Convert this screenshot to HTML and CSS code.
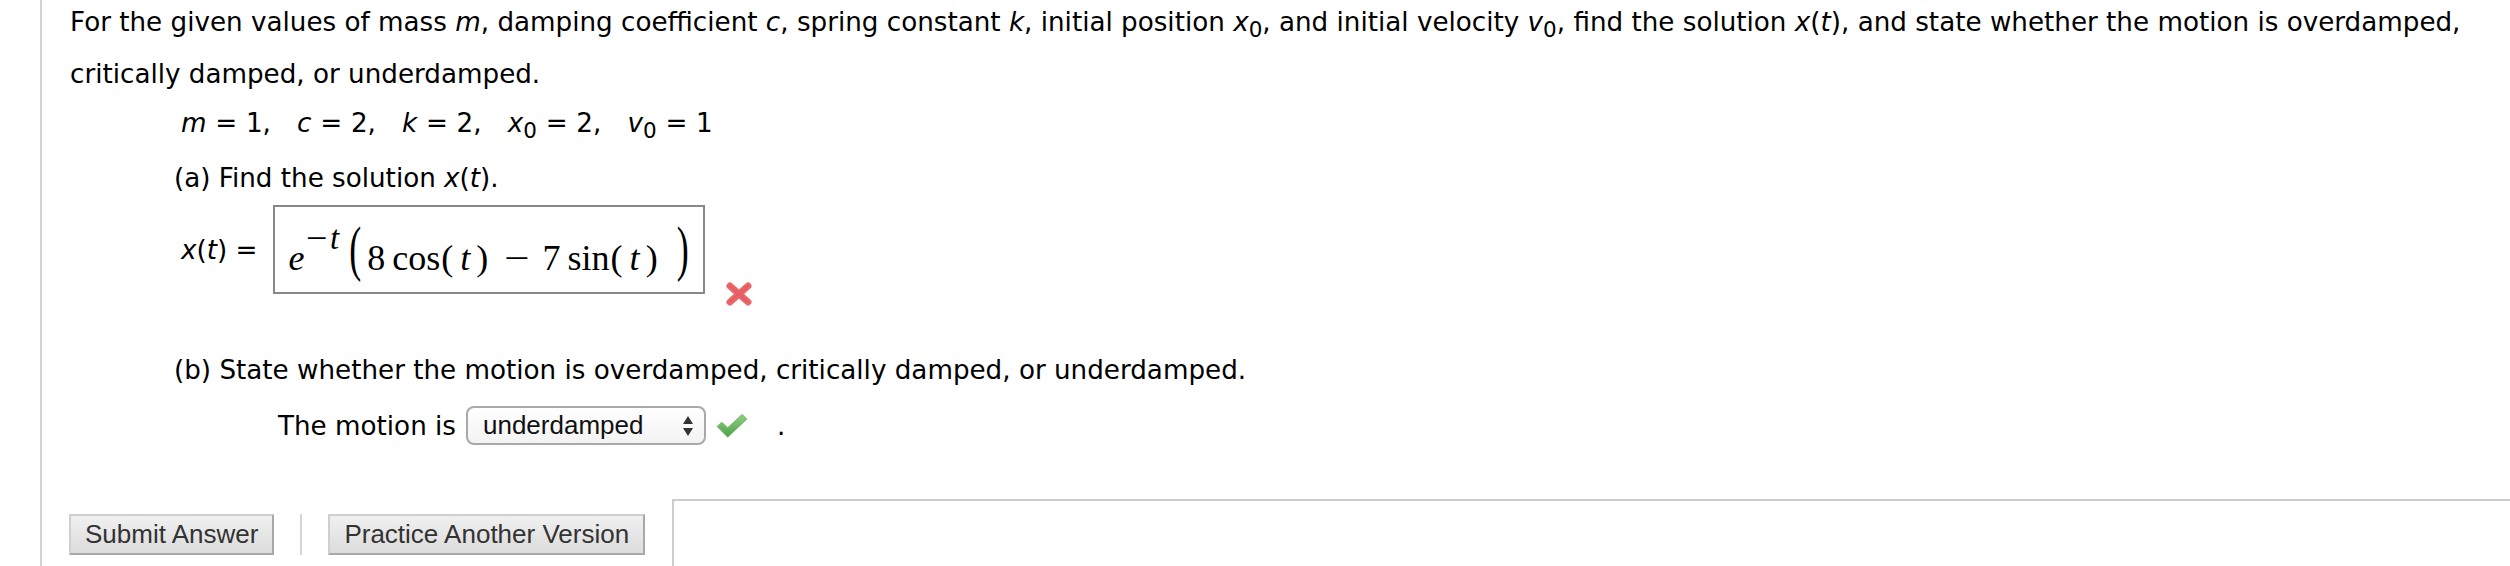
FILE: index.html
```html
<!DOCTYPE html>
<html lang="en">
<head>
<meta charset="utf-8">
<title>Damped motion</title>
<link rel="stylesheet" href="styles.css">
</head>
<body>
<div class="page">
  <p class="intro">For the given values of mass <i>m</i>, damping coefficient <i>c</i>, spring constant <i>k</i>, initial position <i>x</i><sub>0</sub>, and initial velocity <i>v</i><sub>0</sub>, find the solution <i>x</i>(<i>t</i>), and state whether the motion is overdamped, critically damped, or underdamped.</p>
  <div class="given"><i>m</i> = 1,&nbsp;&nbsp; <i>c</i> = 2,&nbsp;&nbsp; <i>k</i> = 2,&nbsp;&nbsp; <i>x</i><sub>0</sub> = 2,&nbsp;&nbsp; <i>v</i><sub>0</sub> = 1</div>
  <div class="part">(a) Find the solution <i>x</i>(<i>t</i>).</div>
  <div class="answer">
    <span class="answer-label"><i>x</i>(<i>t</i>) =</span>
    <div class="math-box">
      <div class="mrow"><span class="mi">e</span><span class="msup"><span class="sup-op">−</span><span class="mi sup-t">t</span></span><span class="big big-l">(</span><span class="mn n8">8</span><span class="fn">cos</span><span class="par">(</span><span class="mi arg">t</span><span class="par">)</span><span class="op">−</span><span class="mn">7</span><span class="fn">sin</span><span class="par">(</span><span class="mi arg">t</span><span class="par">)</span><span class="big big-r">)</span></div>
    </div>
    <svg class="wrong" viewBox="0 0 28 26" aria-label="incorrect">
      <path d="M5 5 L23 21 M23 5 L5 21" stroke="#e9686a" stroke-width="7" stroke-linecap="round" fill="none"/>
      <path d="M5 5 L23 21 M23 5 L5 21" stroke="#e04f52" stroke-width="3" stroke-linecap="round" fill="none" opacity="0.35"/>
    </svg>
  </div>
  <div class="part part-b">(b) State whether the motion is overdamped, critically damped, or underdamped.</div>
  <div class="motion">
    <span>The motion is</span>
    <div class="select">
      <span>underdamped</span>
      <svg class="arrows" viewBox="0 0 12 22"><path d="M6 1 L11 9 L1 9 Z M1 13 L11 13 L6 21 Z" fill="#333"/></svg>
    </div>
    <svg class="check" viewBox="0 0 30 25" aria-label="correct">
      <defs><linearGradient id="g" x1="0" y1="0" x2="0" y2="1"><stop offset="0" stop-color="#8fd283"/><stop offset="1" stop-color="#4f9f48"/></linearGradient></defs>
      <path d="M1 13.5 L5.5 9.5 L11 14.5 L24.5 2 L29 6.5 L11 23.5 Z" fill="url(#g)" stroke="#5aa953" stroke-width="0.6" stroke-linejoin="round"/>
    </svg>
    <span class="period">.</span>
  </div>
  <div class="actions">
    <button class="btn btn-first" type="button">Submit Answer</button>
    <span class="sep"></span>
    <button class="btn" type="button">Practice Another Version</button>
    <div class="panel"></div>
  </div>
</div>
</body>
</html>
```
FILE: styles.css
```css
* { box-sizing: border-box; }
html, body { margin: 0; padding: 0; background: #fff; }
body {
  font-family: "DejaVu Sans", Verdana, sans-serif;
  font-size: 26.2px;
  color: #000;
  height: 566px;
  overflow: hidden;
}
.page {
  margin-left: 40px;
  border-left: 2px solid #d4d4d4;
  padding-left: 28px;
  min-height: 566px;
}
sub {
  font-size: 0.82em;
  vertical-align: -0.3em;
  line-height: 0;
}
.intro {
  margin: -4px 0 0;
  line-height: 52px;
  padding-right: 20px;
}
.given {
  margin: 3px 0 0 111px;
  line-height: 40px;
  word-spacing: 0.4px;
}
.part {
  margin: 15px 0 0 104px;
  line-height: 40px;
}
.answer {
  display: flex;
  align-items: center;
  margin: 7px 0 0 111px;
}
.answer-label { margin-right: 16px; }
.math-box {
  width: 432px;
  height: 89px;
  border: 2px solid #888;
  padding: 31px 0 0 13px;
  font-family: "Liberation Serif", "Times New Roman", serif;
  font-size: 36px;
}
.mrow {
  line-height: 40px;
  white-space: nowrap;
}
.mrow span { display: inline-block; }
.mi { font-style: italic; }
.msup {
  font-size: 33px;
  position: relative;
  top: -21px;
  margin-left: 2px;
}
.sup-op {
  transform: scaleX(1.15);
  transform-origin: 0 50%;
  margin-right: 2px;
}
.sup-t { margin-left: 3px; }
.big {
  transform: translateY(-9px) scaleY(1.7);
  transform-origin: 50% 50%;
}
.big-l { margin-left: 10px; }
.big-r { margin-left: 18px; }
.n8 { margin-left: 6px; }
.fn { margin-left: 7px; }
.par { margin: 0 1px; }
.arg { margin: 0 5px 0 6px; }
.op {
  margin: 0 18px 0 15px;
  transform: scaleX(1.25);
  transform-origin: 0 50%;
}
.wrong {
  align-self: flex-end;
  width: 28px;
  height: 26px;
  margin: 0 0 -13px 20px;
}
.part-b { margin-top: 56px; }
.motion {
  display: flex;
  align-items: center;
  margin: 16px 0 0 208px;
}
.select {
  width: 240px;
  height: 39px;
  margin-left: 10px;
  border: 2px solid #a9a9a9;
  border-radius: 8px;
  background: linear-gradient(#ffffff, #f3f3f3);
  display: flex;
  align-items: center;
  justify-content: space-between;
  padding: 0 10px 0 15px;
  font-family: "Liberation Sans", Arial, sans-serif;
  font-size: 26px;
  color: #111;
}
.arrows { width: 12px; height: 22px; }
.check {
  width: 32px;
  height: 27px;
  margin-left: 10px;
}
.period { margin-left: 29px; }
.actions {
  display: flex;
  align-items: flex-start;
  margin-top: 54px;
}
.btn {
  margin-top: 15px;
  height: 41px;
  padding: 0 14px;
  font-family: "Liberation Sans", Arial, sans-serif;
  font-size: 26px;
  color: #333;
  background: linear-gradient(#f0f0f0, #dcdcdc);
  border: 2px solid;
  border-color: #cfcfcf #a8a8a8 #a8a8a8 #cfcfcf;
  border-radius: 0;
}
.btn-first { margin-left: -1px; }
.sep {
  width: 2px;
  height: 41px;
  margin: 15px 26px 0;
  background: #d4d4d4;
}
.panel {
  flex: 1;
  height: 120px;
  margin-left: 27px;
  border-top: 2px solid #cccccc;
  border-left: 2px solid #cccccc;
}
```
